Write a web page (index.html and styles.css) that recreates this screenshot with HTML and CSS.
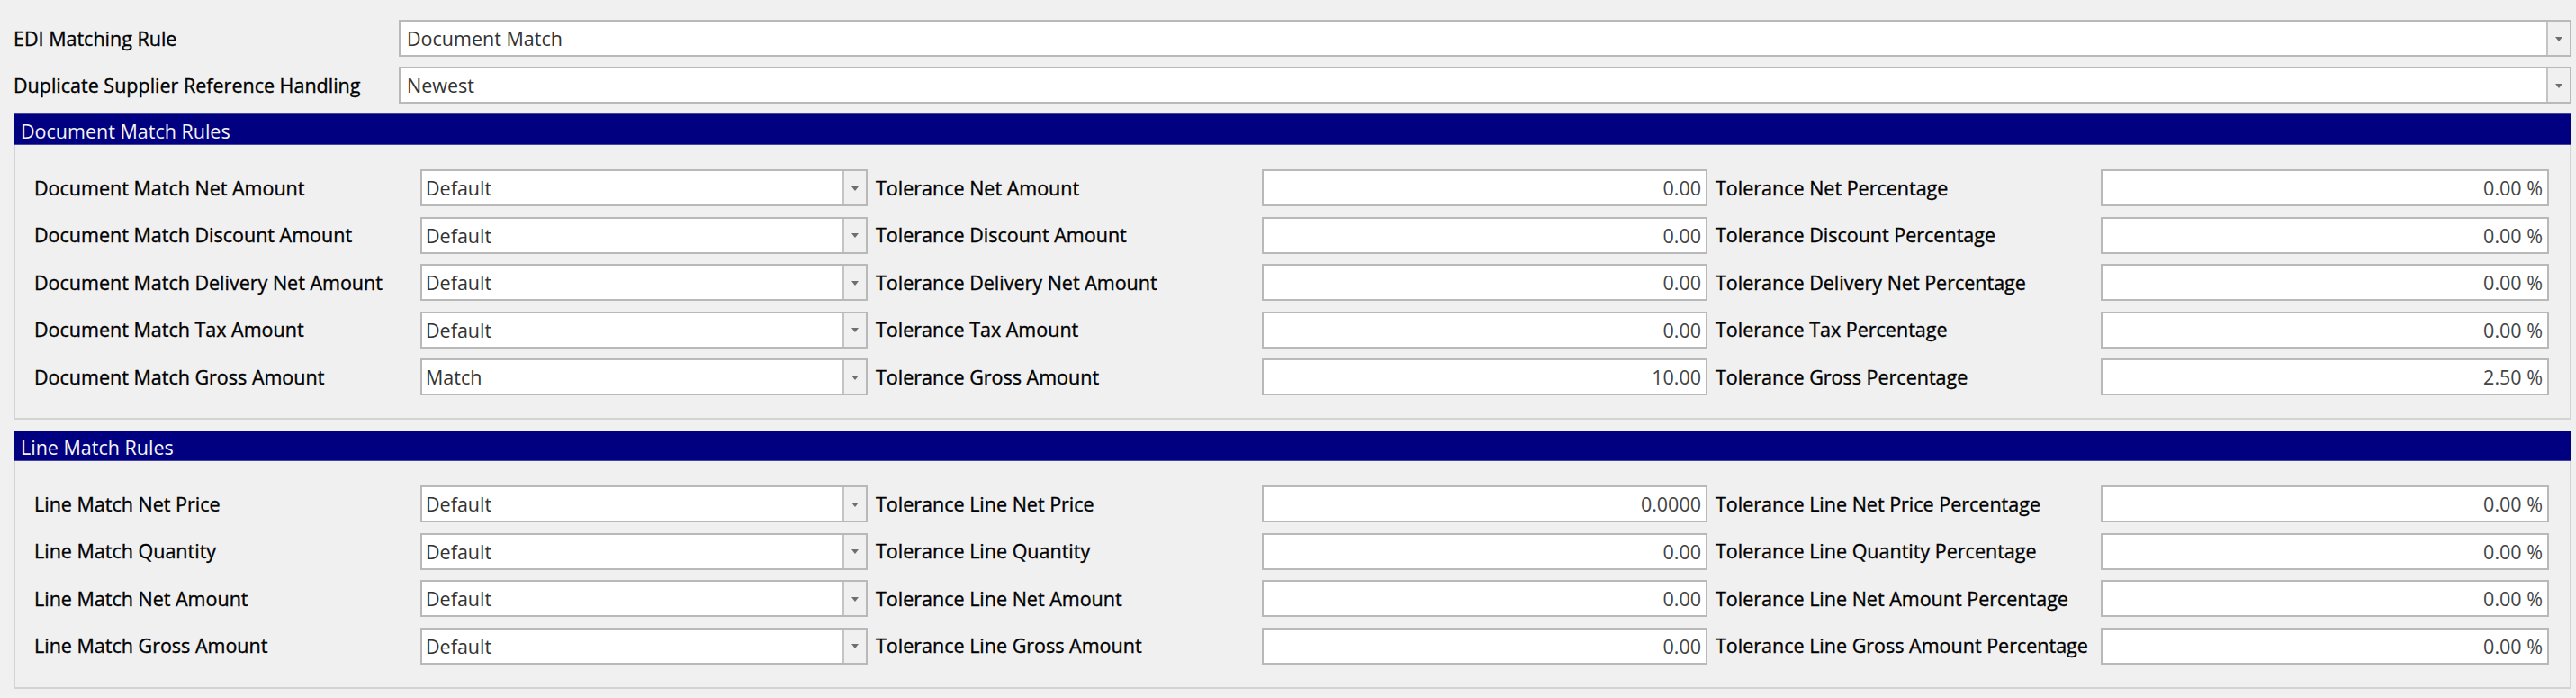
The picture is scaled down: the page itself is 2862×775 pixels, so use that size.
FILE: index.html
```html
<!DOCTYPE html>
<html lang="en">
<head>
<meta charset="utf-8">
<title>EDI Matching Settings</title>
<link rel="stylesheet" href="styles.css">
</head>
<body>
<div class="page">
  <div class="top-grid">
    <div class="label">EDI Matching Rule</div>
    <div class="combo combo-top"><span class="combo-value">Document Match</span><span class="combo-btn"><i class="arrow"></i></span></div>
    <div class="label">Duplicate Supplier Reference Handling</div>
    <div class="combo combo-top"><span class="combo-value">Newest</span><span class="combo-btn"><i class="arrow"></i></span></div>
  </div>

  <section class="group group-doc">
    <div class="group-header">Document Match Rules</div>
    <div class="group-body">
      <div class="label">Document Match Net Amount</div>
      <div class="combo"><span class="combo-value">Default</span><span class="combo-btn"><i class="arrow"></i></span></div>
      <div class="label label-mid">Tolerance Net Amount</div>
      <div class="textbox">0.00</div>
      <div class="label label-mid">Tolerance Net Percentage</div>
      <div class="textbox">0.00 %</div>

      <div class="label">Document Match Discount Amount</div>
      <div class="combo"><span class="combo-value">Default</span><span class="combo-btn"><i class="arrow"></i></span></div>
      <div class="label label-mid">Tolerance Discount Amount</div>
      <div class="textbox">0.00</div>
      <div class="label label-mid">Tolerance Discount Percentage</div>
      <div class="textbox">0.00 %</div>

      <div class="label">Document Match Delivery Net Amount</div>
      <div class="combo"><span class="combo-value">Default</span><span class="combo-btn"><i class="arrow"></i></span></div>
      <div class="label label-mid">Tolerance Delivery Net Amount</div>
      <div class="textbox">0.00</div>
      <div class="label label-mid">Tolerance Delivery Net Percentage</div>
      <div class="textbox">0.00 %</div>

      <div class="label">Document Match Tax Amount</div>
      <div class="combo"><span class="combo-value">Default</span><span class="combo-btn"><i class="arrow"></i></span></div>
      <div class="label label-mid">Tolerance Tax Amount</div>
      <div class="textbox">0.00</div>
      <div class="label label-mid">Tolerance Tax Percentage</div>
      <div class="textbox">0.00 %</div>

      <div class="label">Document Match Gross Amount</div>
      <div class="combo"><span class="combo-value">Match</span><span class="combo-btn"><i class="arrow"></i></span></div>
      <div class="label label-mid">Tolerance Gross Amount</div>
      <div class="textbox">10.00</div>
      <div class="label label-mid">Tolerance Gross Percentage</div>
      <div class="textbox">2.50 %</div>
    </div>
  </section>

  <section class="group group-line">
    <div class="group-header">Line Match Rules</div>
    <div class="group-body">
      <div class="label">Line Match Net Price</div>
      <div class="combo"><span class="combo-value">Default</span><span class="combo-btn"><i class="arrow"></i></span></div>
      <div class="label label-mid">Tolerance Line Net Price</div>
      <div class="textbox">0.0000</div>
      <div class="label label-mid">Tolerance Line Net Price Percentage</div>
      <div class="textbox">0.00 %</div>

      <div class="label">Line Match Quantity</div>
      <div class="combo"><span class="combo-value">Default</span><span class="combo-btn"><i class="arrow"></i></span></div>
      <div class="label label-mid">Tolerance Line Quantity</div>
      <div class="textbox">0.00</div>
      <div class="label label-mid">Tolerance Line Quantity Percentage</div>
      <div class="textbox">0.00 %</div>

      <div class="label">Line Match Net Amount</div>
      <div class="combo"><span class="combo-value">Default</span><span class="combo-btn"><i class="arrow"></i></span></div>
      <div class="label label-mid">Tolerance Line Net Amount</div>
      <div class="textbox">0.00</div>
      <div class="label label-mid">Tolerance Line Net Amount Percentage</div>
      <div class="textbox">0.00 %</div>

      <div class="label">Line Match Gross Amount</div>
      <div class="combo"><span class="combo-value">Default</span><span class="combo-btn"><i class="arrow"></i></span></div>
      <div class="label label-mid">Tolerance Line Gross Amount</div>
      <div class="textbox">0.00</div>
      <div class="label label-mid">Tolerance Line Gross Amount Percentage</div>
      <div class="textbox">0.00 %</div>
    </div>
  </section>
</div>
</body>
</html>
```

FILE: styles.css
```css
* {
  box-sizing: border-box;
}

html, body {
  margin: 0;
  padding: 0;
  background: #f0f0f0;
}

body {
  font-family: "Open Sans", "Noto Sans", "Liberation Sans", sans-serif;
  font-size: 21.5px;
  color: #000;
  overflow: hidden;
}

.page {
  padding: 22px 5px 0 15px;
}

.top-grid {
  display: grid;
  grid-template-columns: 428px 1fr;
  grid-auto-rows: 41px;
  row-gap: 11px;
}

.label {
  display: flex;
  align-items: center;
  white-space: nowrap;
  line-height: 1;
  color: #000;
  -webkit-text-stroke: 0.35px #000;
}

.label-mid {
  padding-left: 9px;
}

.combo {
  display: flex;
  align-items: stretch;
  background: #fff;
  border: 2px solid #b9b9b9;
  height: 41px;
}

.combo-value {
  flex: 1;
  display: flex;
  align-items: center;
  padding-left: 4px;
  color: #333;
  white-space: nowrap;
  overflow: hidden;
}

.combo-top .combo-value {
  padding-left: 7px;
}

.combo-btn {
  width: 26px;
  flex: none;
  display: flex;
  align-items: center;
  justify-content: center;
  background: #f0f0f0;
  border-left: 2px solid #c4c4c4;
}

.arrow {
  display: block;
  width: 0;
  height: 0;
  border-left: 4px solid transparent;
  border-right: 4px solid transparent;
  border-top: 5px solid #6e6e6e;
  margin-top: 1px;
}

.group {
  display: flex;
  flex-direction: column;
}

.group-doc {
  margin-top: 11px;
}

.group-line {
  margin-top: 12px;
}

.group-header {
  background: #000080;
  border: 1px solid #4646a0;
  color: #f4f4f4;
  display: flex;
  align-items: center;
  padding: 3px 0 0 7px;
  white-space: nowrap;
}

.group-doc .group-header {
  height: 35px;
}

.group-line .group-header {
  height: 34px;
}

.group-body {
  display: grid;
  grid-template-columns: 429px 497px 438px 495px 437px 498px;
  grid-auto-rows: 41px;
  row-gap: 11.5px;
  border: 2px solid #d3d3d3;
  border-top: none;
  padding: 27px 0 25px 21px;
}

.textbox {
  display: flex;
  align-items: center;
  justify-content: flex-end;
  background: #fff;
  border: 2px solid #b9b9b9;
  padding-right: 5px;
  color: #444;
  white-space: nowrap;
}
```
